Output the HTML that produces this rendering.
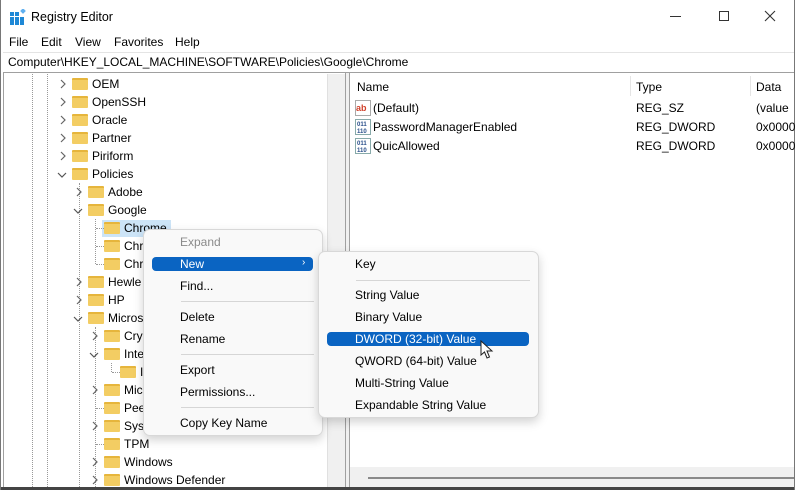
<!DOCTYPE html><html><head><style>
*{margin:0;padding:0;box-sizing:border-box}
body{width:795px;height:490px;background:#fff;font-family:"Liberation Sans",sans-serif;font-size:12px;color:#000;position:relative;overflow:hidden}
.a{position:absolute;white-space:nowrap}
.t{position:absolute;white-space:nowrap;line-height:14px}
.fold{position:absolute;width:16px;height:12px;background:#f3cd63;border-top:2px solid #e6b53c;border-radius:1px}
.chev{position:absolute;color:#666;font-size:11px}
.menu{position:absolute;background:#f9f9f9;border:1px solid #d8d8d8;border-radius:7px;box-shadow:0 4px 10px rgba(0,0,0,.18)}
.sep{position:absolute;height:1px;background:#d6d6d6}
.hl{position:absolute;background:#0a64c2;border-radius:4px}
.dot{position:absolute;border-left:1px dotted #999}
</style></head><body>
<!-- title -->
<div class="a" style="left:10px;top:9px;width:16px;height:16px">
<svg width="16" height="16"><rect x="0" y="3" width="4" height="4" fill="#1e88d6"/><rect x="5" y="3" width="4" height="4" fill="#1e88d6"/><rect x="0" y="8" width="4" height="4" fill="#1e88d6"/><rect x="5" y="8" width="4" height="4" fill="#1e88d6"/><rect x="0" y="12" width="4" height="4" fill="#1e88d6"/><rect x="5" y="12" width="4" height="4" fill="#1e88d6"/><rect x="10" y="8" width="4" height="4" fill="#1e88d6"/><rect x="10" y="12" width="4" height="4" fill="#1e88d6"/><rect x="11" y="0" width="4" height="4" fill="#5fb0f0" transform="rotate(45 13 2)"/></svg></div>
<div class="t" style="left:31px;top:10px;font-size:12.5px">Registry Editor</div>
<div class="a" style="left:670px;top:16px;width:11px;height:1px;background:#333"></div>
<div class="a" style="left:719px;top:11px;width:10px;height:10px;border:1px solid #333"></div>
<svg class="a" style="left:764px;top:10px" width="12" height="12"><path d="M1 1L11 11M11 1L1 11" stroke="#333" stroke-width="1.1"/></svg>
<!-- menu bar -->
<div class="t" style="left:9px;top:35px">File</div>
<div class="t" style="left:41px;top:35px">Edit</div>
<div class="t" style="left:75px;top:35px">View</div>
<div class="t" style="left:114px;top:35px">Favorites</div>
<div class="t" style="left:175px;top:35px">Help</div>
<div class="a" style="left:3px;top:52px;width:792px;height:21px;border-top:1px solid #e4e4e4;border-bottom:1px solid #a0a0a0"></div>
<div class="t" style="left:8px;top:55px">Computer\HKEY_LOCAL_MACHINE\SOFTWARE\Policies\Google\Chrome</div>
<!-- panes -->
<div class="a" style="left:3px;top:73px;width:342px;height:416px;border-left:1px solid #a0a0a0"></div>
<div class="a" style="left:327px;top:74px;width:18px;height:414px;background:#f0f0f0;border-left:1px solid #e0e0e0"></div>
<div class="a" style="left:345px;top:73px;width:5px;height:416px;background:#f0f0f0;border-left:1px solid #a0a0a0;border-right:1px solid #a0a0a0"></div>
<div class="a" style="left:350px;top:467px;width:445px;height:21px;background:#f0f0f0"></div>
<div class="a" style="left:368px;top:477px;width:427px;height:2px;background:#8a8a8a"></div>
<div class="a" style="left:0;top:487px;width:795px;height:3px;background:#444"></div>
<div class="a" style="left:0;top:0;width:1px;height:490px;background:#777"></div>
<div class="a" style="left:794px;top:0;width:1px;height:490px;background:#777"></div>
<!-- dotted lines -->
<div class="dot" style="left:32px;top:74px;height:413px"></div>
<div class="dot" style="left:47px;top:74px;height:413px"></div>
<div class="dot" style="left:79px;top:183px;height:304px"></div>
<div class="dot" style="left:95px;top:219px;height:45px"></div>
<div class="dot" style="left:95px;top:327px;height:160px"></div>
<div class="dot" style="left:111px;top:363px;height:9px"></div>
<!-- list header -->
<div class="a" style="left:630px;top:76px;width:1px;height:20px;background:#e5e5e5"></div>
<div class="a" style="left:750px;top:76px;width:1px;height:20px;background:#e5e5e5"></div>
<div class="t" style="left:357px;top:80px">Name</div>
<div class="t" style="left:636px;top:80px">Type</div>
<div class="t" style="left:756px;top:80px">Data</div>
<svg class="a" style="left:355px;top:100px" width="16" height="16"><rect x="0.5" y="0.5" width="15" height="15" fill="#fff" stroke="#aaa"/><text x="1" y="11" font-size="9" font-weight="bold" fill="#d0402a" font-family="Liberation Sans">ab</text></svg>
<svg class="a" style="left:355px;top:119px" width="16" height="16"><rect x="0.5" y="0.5" width="15" height="15" fill="#fff" stroke="#8aa"/><text x="2" y="7" font-size="6" font-weight="bold" fill="#2a4f8a" font-family="Liberation Sans">011</text><text x="2" y="14" font-size="6" font-weight="bold" fill="#2a4f8a" font-family="Liberation Sans">110</text></svg>
<svg class="a" style="left:355px;top:138px" width="16" height="16"><rect x="0.5" y="0.5" width="15" height="15" fill="#fff" stroke="#8aa"/><text x="2" y="7" font-size="6" font-weight="bold" fill="#2a4f8a" font-family="Liberation Sans">011</text><text x="2" y="14" font-size="6" font-weight="bold" fill="#2a4f8a" font-family="Liberation Sans">110</text></svg>
<div class="t" style="left:373px;top:101px">(Default)</div><div class="t" style="left:636px;top:101px">REG_SZ</div><div class="t" style="left:756px;top:101px">(value</div>
<div class="t" style="left:373px;top:120px">PasswordManagerEnabled</div><div class="t" style="left:636px;top:120px">REG_DWORD</div><div class="t" style="left:756px;top:120px">0x0000</div>
<div class="t" style="left:373px;top:139px">QuicAllowed</div><div class="t" style="left:636px;top:139px">REG_DWORD</div><div class="t" style="left:756px;top:139px">0x0000</div>
<!-- tree -->
<div class="a" style="left:102px;top:220px;width:69px;height:17px;background:#cce4f7"></div>
<div id="tree"></div>
<script>
var rows=[[0,1,'OEM'],[0,1,'OpenSSH'],[0,1,'Oracle'],[0,1,'Partner'],[0,1,'Piriform'],[0,2,'Policies'],[1,1,'Adobe'],[1,2,'Google'],[2,0,'Chrome'],[2,0,'Chr'],[2,0,'Chr'],[1,1,'Hewle'],[1,1,'HP'],[1,2,'Micros'],[2,1,'Cry'],[2,2,'Inte'],[3,0,'I'],[2,1,'Mic'],[2,0,'Pee'],[2,1,'Sys'],[2,0,'TPM'],[2,1,'Windows'],[2,1,'Windows Defender']];
var h='';rows.forEach(function(r,i){var y=84+i*18,lv=r[0],x=72+lv*16;
if(r[1]==1)h+='<div class="chev" style="left:'+(x-13)+'px;top:'+(y-5)+'px"><svg width="8" height="10"><path d="M2 1L6 5L2 9" stroke="#666" fill="none" stroke-width="1.2"/></svg></div>';
if(r[1]==2)h+='<div class="chev" style="left:'+(x-15)+'px;top:'+(y-4)+'px"><svg width="10" height="8"><path d="M1 2L5 6L9 2" stroke="#555" fill="none" stroke-width="1.2"/></svg></div>';
if(r[1]==0)h+='<div class="a" style="left:'+(x-8)+'px;top:'+y+'px;width:8px;border-top:1px dotted #999"></div>';
h+='<div class="fold" style="left:'+x+'px;top:'+(y-6)+'px"></div><div class="t" style="left:'+(x+20)+'px;top:'+(y-7)+'px">'+r[2]+'</div>';});
document.getElementById('tree').innerHTML=h;
</script>
<!-- context menu -->
<div class="menu" style="left:143px;top:229px;width:180px;height:207px"></div>
<div class="hl" style="left:152px;top:257px;width:161px;height:14px"></div>
<div class="t" style="left:180px;top:235px;color:#8a8a8a">Expand</div>
<div class="t" style="left:180px;top:257px;color:#fff">New</div>
<div class="t" style="left:302px;top:256px;color:#fff;font-size:10px">›</div>
<div class="t" style="left:180px;top:279px">Find...</div>
<div class="sep" style="left:181px;top:301px;width:133px"></div>
<div class="t" style="left:180px;top:310px">Delete</div>
<div class="t" style="left:180px;top:332px">Rename</div>
<div class="sep" style="left:181px;top:354px;width:133px"></div>
<div class="t" style="left:180px;top:363px">Export</div>
<div class="t" style="left:180px;top:385px">Permissions...</div>
<div class="sep" style="left:181px;top:407px;width:133px"></div>
<div class="t" style="left:180px;top:416px">Copy Key Name</div>
<!-- submenu -->
<div class="menu" style="left:318px;top:251px;width:221px;height:167px"></div>
<div class="hl" style="left:327px;top:332px;width:202px;height:14px"></div>
<div class="t" style="left:355px;top:257px">Key</div>
<div class="sep" style="left:356px;top:280px;width:174px"></div>
<div class="t" style="left:355px;top:288px">String Value</div>
<div class="t" style="left:355px;top:310px">Binary Value</div>
<div class="t" style="left:355px;top:332px;color:#fff">DWORD (32-bit) Value</div>
<div class="t" style="left:355px;top:354px">QWORD (64-bit) Value</div>
<div class="t" style="left:355px;top:376px">Multi-String Value</div>
<div class="t" style="left:355px;top:398px">Expandable String Value</div>
<svg class="a" style="left:480px;top:340px" width="14" height="20"><path d="M1 1L1 15L4.5 12L7 18L9.5 17L7 11L12 11Z" fill="#fff" stroke="#222" stroke-width="1"/></svg>
</body></html>
